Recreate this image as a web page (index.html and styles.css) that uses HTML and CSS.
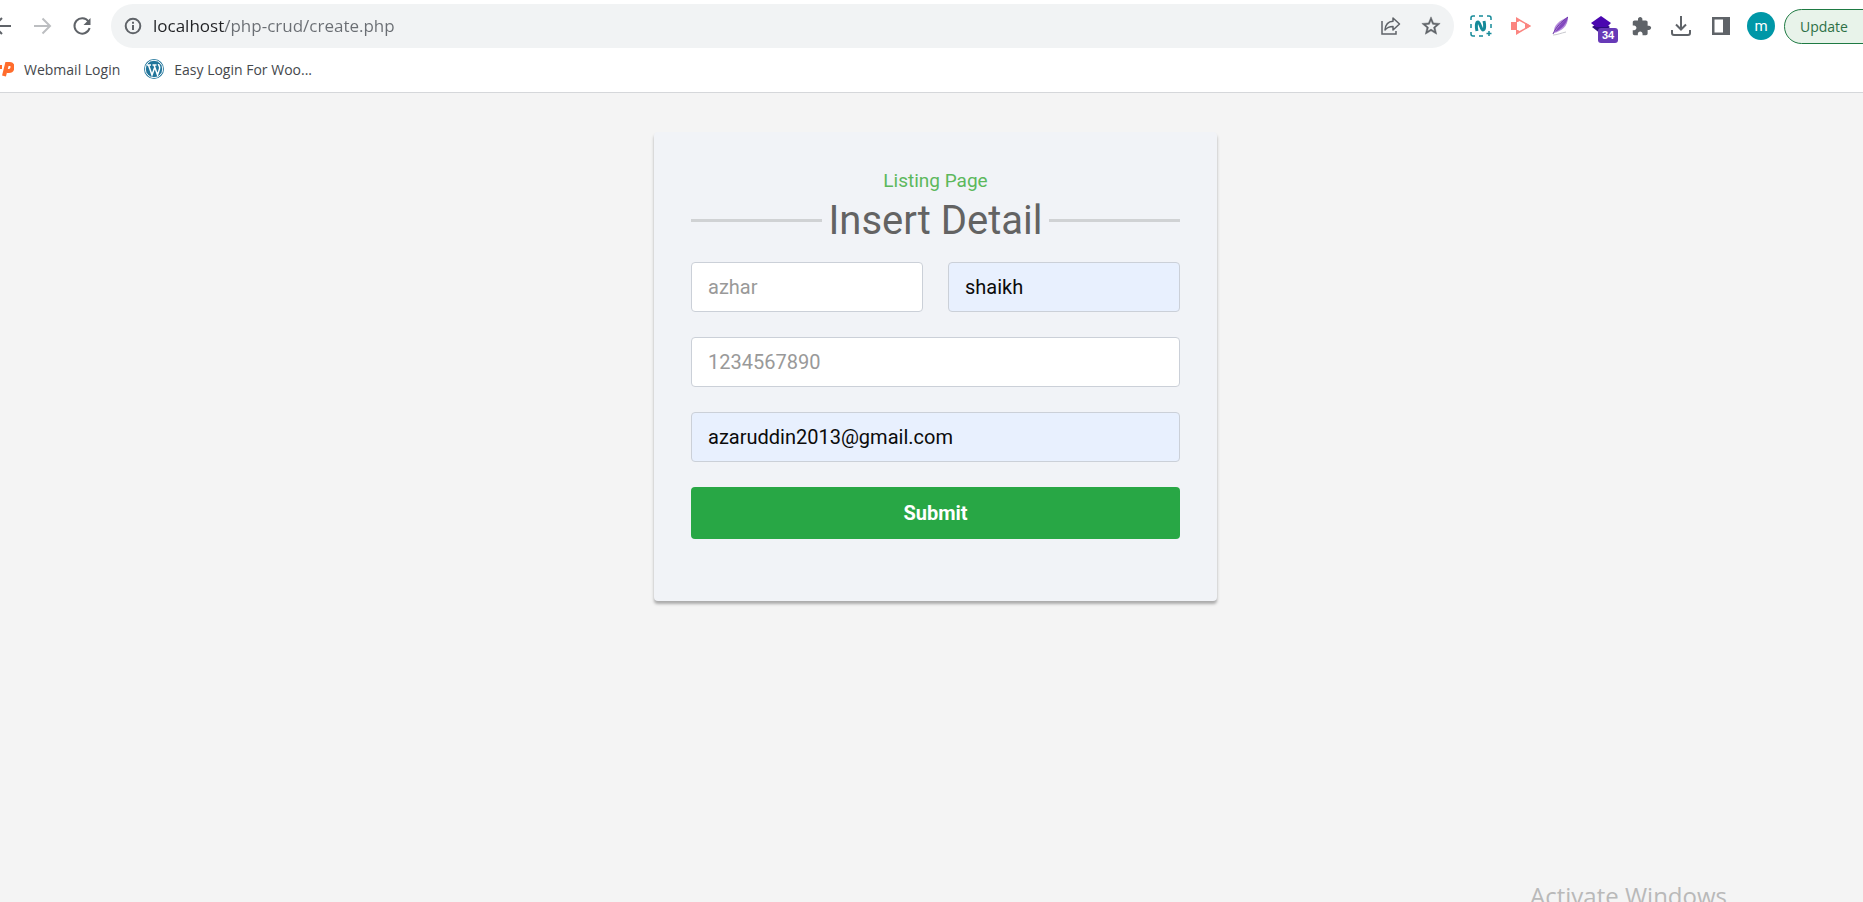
FILE: index.html
```html
<!DOCTYPE html>
<html lang="en">
<head>
  <meta charset="UTF-8">
  <meta name="viewport" content="width=device-width, initial-scale=1.0">
  <title>Insert Detail</title>
  <link rel="stylesheet" href="styles.css">
</head>
<body>
  <header class="browser">
    <div class="toolbar">
      <button class="tool" aria-label="Back">
        <svg width="24" height="24" viewBox="0 0 24 24" fill="none" stroke="#5f6368" stroke-width="2"><path d="M21 12H4M12 4l-8 8 8 8"/></svg>
      </button>
      <button class="tool" aria-label="Forward">
        <svg width="24" height="24" viewBox="0 0 24 24" fill="none" stroke="#bcbec1" stroke-width="2"><path d="M4 12h16M12.500 4.500l7.500 7.500-7.500 7.500"/></svg>
      </button>
      <button class="tool" aria-label="Reload">
        <svg width="24" height="24" viewBox="0 0 24 24" fill="none" stroke="#5f6368" stroke-width="2"><path d="M18.500 7.500A7.700 7.700 0 1 0 19.600 14"/><path d="M20.500 4v7h-7z" fill="#5f6368" stroke="none"/></svg>
      </button>
      <div class="omnibox">
        <svg width="18" height="18" viewBox="0 0 18 18" fill="none" stroke="#5f6368" stroke-width="2"><circle cx="9" cy="9" r="7.300"/><path d="M9 8v5M9 4.800v2"/></svg>
        <input class="url" type="text" aria-label="Address" value="localhost/php-crud/create.php">
        <button class="tool" aria-label="Share">
          <svg width="22" height="22" viewBox="0 0 22 22" fill="none" stroke="#5f6368" stroke-width="1.500"><path d="M2 6v13h14v-3"/><path d="M5 15c.5-5.500 3.500-8.500 8-8.700V3l6.500 6-6.500 6v-3.500c-3.500 0-6 1-8 3.500z" stroke-linejoin="round"/></svg>
        </button>
        <button class="tool" aria-label="Bookmark this tab">
          <svg width="22" height="22" viewBox="0 0 24 24" fill="#5f6368" stroke="#5f6368" stroke-width=".5"><path d="M22 9.240l-7.190-.62L12 2 9.190 8.630 2 9.240l5.460 4.730L5.820 21 12 17.270 18.180 21l-1.630-7.030L22 9.240zM12 15.400l-3.760 2.270 1-4.280-3.320-2.880 4.380-.38L12 6.100l1.710 4.040 4.380.38-3.320 2.880 1 4.280L12 15.400z"/></svg>
        </button>
      </div>
      <button class="tool" aria-label="Screen capture">
        <svg width="22" height="22" viewBox="0 0 22 22" fill="none" stroke="#168a99" stroke-width="1.500"><path d="M1 5V3q0-2 2-2h2M9 1h4M17 1h2q2 0 2 2v2M1 9v4M21 9v4M1 17v2q0 2 2 2h2M9 21h4"/><path d="M7 16c-1-4-1-9 1-9s3 8 5 8 2-5 1-9" stroke-width="3"/><path d="M19 16v5M16.500 18.500h5"/></svg>
      </button>
      <button class="tool" aria-label="Recorder">
        <svg width="22" height="22" viewBox="0 0 22 22" fill="#fb8580"><path d="M1 7h6v8H1z"/><path d="M6 2l15 9-15 9v-5h2l1.500 1L15 13V9L9.500 6 8 7H6z"/><path d="M16 8l5 3-5 3z"/></svg>
      </button>
      <button class="tool" aria-label="Quill">
        <svg width="20" height="22" viewBox="0 0 20 22"><path d="M17 2C9 5 2 10 3 18c7-2 14-6 14-16z" fill="#b48adb"/><path d="M17 2c-1 6-6 12-13 15C7 12 11 7 17 2z" fill="#8247bd"/><path d="M17 2C10 7 5 12 2 19" fill="none" stroke="#6b35a8"/><path d="M2 20c4 0 8-2 13-3" fill="none" stroke="#c9c9cf"/></svg>
      </button>
      <button class="tool counter" aria-label="Layers">
        <svg width="22" height="22" viewBox="0 0 22 22"><path d="M2 12l9-6 9 6-9 7z" fill="#2d0a80"/><path d="M1 8l10-7 10 7-4 4H6z" fill="#4a07b0"/></svg>
        <span class="badge">34</span>
      </button>
      <button class="tool" aria-label="Extensions">
        <svg width="21" height="21" viewBox="0 0 24 24" fill="#5f6368"><path d="M20.500 11H19V7c0-1.100-.9-2-2-2h-4V3.500C13 2.120 11.880 1 10.500 1S8 2.120 8 3.500V5H4c-1.100 0-1.990.9-1.990 2v3.800H3.500c1.490 0 2.700 1.210 2.700 2.700s-1.210 2.700-2.700 2.700H2V20c0 1.100.9 2 2 2h3.800v-1.500c0-1.490 1.210-2.700 2.700-2.700s2.700 1.210 2.700 2.700V22H17c1.100 0 2-.9 2-2v-4h1.500c1.380 0 2.500-1.120 2.500-2.500S21.880 11 20.500 11z"/></svg>
      </button>
      <button class="tool" aria-label="Downloads">
        <svg width="22" height="22" viewBox="0 0 22 22" fill="none" stroke="#5f6368" stroke-width="2"><path d="M11 1v13M6 9.500l5 5 5-5M2 15v3q0 2 2 2h14q2 0 2-2v-3"/></svg>
      </button>
      <button class="tool" aria-label="Side panel">
        <svg width="20" height="20" viewBox="0 0 20 20"><path d="M1 1h18v18H1zM3.500 3.500v13H12v-13z" fill="#5f6368" fill-rule="evenodd"/></svg>
      </button>
      <button class="tool" aria-label="Profile"><span class="avatar">m</span></button>
      <button class="update">Update</button>
    </div>
    <nav class="bookmarks">
      <a href="#">
        <svg width="24" height="20" viewBox="0 0 24 20" fill="none" stroke="#ff6c2c" stroke-width="4"><path d="M12 8H9c-4 0-4 6 0 6h1"/><path d="M14 17l3-12h3c4 0 3 7-1 7h-2"/></svg>
        Webmail Login
      </a>
      <a href="#">
        <svg width="20" height="20" viewBox="0 0 20 20"><circle cx="10" cy="10" r="10" fill="#21759b"/><circle cx="10" cy="10" r="8.700" fill="none" stroke="#fff"/><path d="M3 6h4M8.500 6h4M4.500 6l3.500 10 2.500-7M10 6l3.500 10 2-6c1-3-1-3-1-5" fill="none" stroke="#fff" stroke-width="1.500"/></svg>
        Easy Login For Woo...
      </a>
    </nav>
  </header>

  <main class="page">
    <form class="card">
      <a class="listing" href="#">Listing Page</a>
      <h2>Insert Detail</h2>
      <div class="row">
        <input type="text" aria-label="First name" placeholder="azhar">
        <input class="filled" type="text" aria-label="Last name" value="shaikh">
      </div>
      <input type="text" aria-label="Phone" placeholder="1234567890">
      <input class="filled" type="email" aria-label="Email" value="azaruddin2013@gmail.com">
      <button class="submit" type="submit">Submit</button>
    </form>
  </main>

  <div class="watermark">Activate Windows</div>
</body>
</html>
```
FILE: styles.css
```css
* {
  box-sizing: border-box;
}

body {
  margin: 0;
  height: 100vh;
  overflow: hidden;
  position: relative;
  background: #f4f4f4;
  font-family: "Roboto", sans-serif;
}

/* browser bar */
.browser {
  background: #fff;
  border-bottom: 1px solid #d5d7da;
  font-family: "Open Sans", "Noto Sans", sans-serif;
}

.toolbar {
  display: flex;
  align-items: center;
  margin: 0 -29px 0 -18px;
  padding-top: 4px;
}

.tool {
  display: flex;
  flex: none;
  align-items: center;
  justify-content: center;
  width: 40px;
  height: 42px;
  padding: 0;
  border: 0;
  background: none;
}

.omnibox {
  display: flex;
  flex: 1;
  align-items: center;
  height: 44px;
  margin: 0 7px 0 9px;
  padding: 0 3px 0 13px;
  border-radius: 22px;
  background: #f1f3f4;
}

/* host is dark, the path after it is grey */
.url {
  flex: 1;
  min-width: 0;
  margin-left: 11px;
  padding: 0;
  border: 0;
  outline: 0;
  background: linear-gradient(to right, #202124 72px, #6a6e73 72px);
  background-clip: text;
  color: transparent;
  font-family: inherit;
  font-size: 17px;
  line-height: 24px;
}

.counter {
  position: relative;
}

.badge {
  position: absolute;
  left: 17px;
  top: 23px;
  width: 20px;
  border-radius: 3px;
  background: #673ab7;
  color: #fff;
  font-size: 11px;
  font-weight: 700;
  line-height: 15px;
  text-align: center;
}

.avatar {
  width: 28px;
  border-radius: 50%;
  background: #0097a7;
  color: #fff;
  font-family: "Roboto", sans-serif;
  font-size: 15px;
  line-height: 28px;
}

.update {
  width: 108px;
  height: 35px;
  margin-left: 3px;
  padding: 0 0 0 15px;
  border: 1px solid #1e7a43;
  border-radius: 18px;
  background: #e8f3ea;
  color: #2d7046;
  font-family: inherit;
  font-size: 14px;
  text-align: left;
}

.bookmarks {
  display: flex;
  gap: 24px;
  height: 44px;
  margin-left: -10px;
  padding-bottom: 2px;
}

.bookmarks a {
  display: flex;
  align-items: center;
  gap: 10px;
  color: #45484c;
  font-size: 14px;
  text-decoration: none;
}

/* form */
.page {
  padding: 39px 0 0 8px;
}

.card {
  display: flex;
  flex-direction: column;
  gap: 25px;
  width: 100%;
  max-width: 563px;
  margin: 0 auto;
  padding: 38px 37px 62px;
  border-radius: 4px;
  background: #f1f3f7;
  box-shadow: 0 3px 3px rgba(0, 0, 0, 0.3);
}

.listing {
  align-self: center;
  color: #5cb85c;
  font-size: 19px;
  line-height: 22px;
  text-decoration: none;
}

.card h2 {
  display: flex;
  align-items: center;
  gap: 6px;
  margin: -23px 0 -10px;
  color: #636363;
  font-size: 40px;
  font-weight: 400;
  line-height: 53px;
}

.card h2::before,
.card h2::after {
  content: "";
  flex: 1;
  height: 3px;
  background: #d0d2d4;
}

.row {
  display: grid;
  grid-template-columns: 1fr 1fr;
  gap: 25px;
}

.card input {
  width: 100%;
  height: 50px;
  padding: 0 16px;
  border: 1px solid #cbd0d8;
  border-radius: 4px;
  background: #fff;
  color: #0b0b0b;
  font-family: inherit;
  font-size: 20px;
}

.card input::placeholder {
  color: #999;
}

.card .filled {
  background: #e8f0fe;
}

.submit {
  height: 52px;
  border: 0;
  border-radius: 4px;
  background: #28a745;
  color: #fff;
  font-family: inherit;
  font-size: 20px;
  font-weight: 700;
}

.watermark {
  position: absolute;
  right: 136px;
  bottom: -12px;
  color: #b9b9b9;
  font-family: "Open Sans", sans-serif;
  font-size: 24px;
  line-height: 36px;
}
```
